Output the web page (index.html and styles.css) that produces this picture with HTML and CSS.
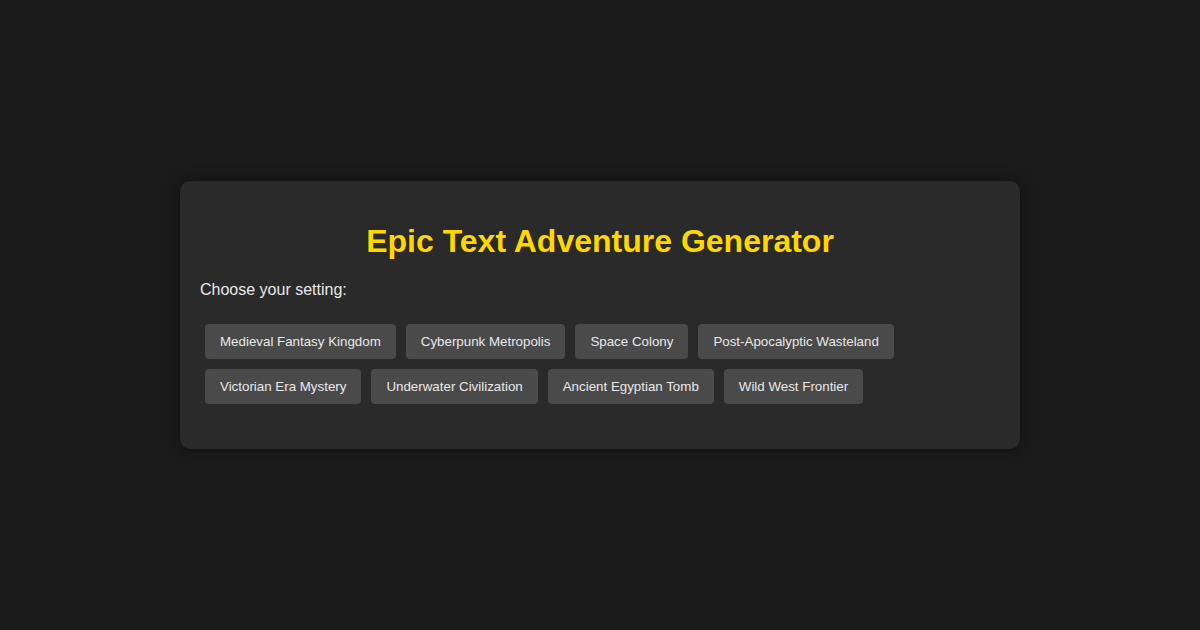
FILE: index.html
```html
<!DOCTYPE html>
<html lang="en">
<head>
  <meta charset="UTF-8" />
  <meta name="viewport" content="width=device-width, initial-scale=1.0"/>
  <title>Epic Text Adventure Generator</title>
  <link rel="stylesheet" href="styles.css">
</head>
<body>
  <div class="container">
    <h1>Epic Text Adventure Generator</h1>
    <div class="prompt">Choose your setting:</div>

    <div class="settings">
      <button class="setting-btn">Medieval Fantasy Kingdom</button>
      <button class="setting-btn">Cyberpunk Metropolis</button>
      <button class="setting-btn">Space Colony</button>
      <button class="setting-btn">Post-Apocalyptic Wasteland</button>
      <button class="setting-btn">Victorian Era Mystery</button>
      <button class="setting-btn">Underwater Civilization</button>
      <button class="setting-btn">Ancient Egyptian Tomb</button>
      <button class="setting-btn">Wild West Frontier</button>
    </div>
  </div>
</body>
</html>
```

FILE: styles.css
```css
body {
  font-family: "Liberation Sans", Arial, sans-serif;
  background: #1b1b1b;
  color: #e8e8e8;
  margin: 0;
  min-height: 630px;
  display: flex;
  justify-content: center;
  align-items: center;
}

.container {
  width: 800px;
  background: #2a2a2a;
  padding: 20px;
  border-radius: 10px;
  box-shadow: 0 0 15px rgba(0, 0, 0, 0.45);
}

h1 {
  color: #ffd700;
  text-align: center;
  font-size: 32px;
  margin: 0.67em 0;
}

.prompt {
  font-size: 16px;
}

.settings {
  margin: 20px 0;
  display: flex;
  flex-wrap: wrap;
}

.setting-btn {
  font-family: "Liberation Sans", Arial, sans-serif;
  font-size: 13.33px;
  line-height: 15px;
  background: #4a4a4a;
  color: #e8e8e8;
  border: none;
  border-radius: 4px;
  padding: 10px 15px;
  margin: 5px;
  cursor: pointer;
}

.setting-btn:hover {
  background: #5a5a5a;
}
```
